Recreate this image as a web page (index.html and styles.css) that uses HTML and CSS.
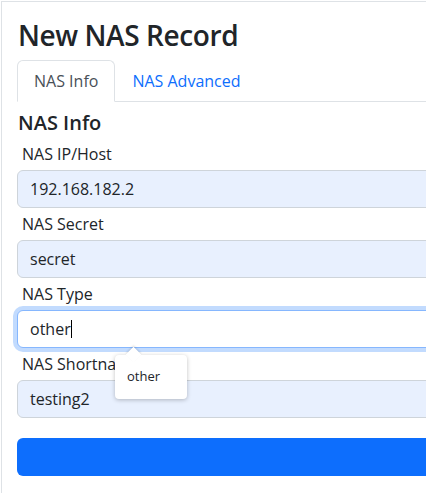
FILE: index.html
```html
<!DOCTYPE html>
<html lang="en">
<head>
<meta charset="utf-8">
<title>New NAS Record</title>
<link rel="stylesheet" href="styles.css">
</head>
<body>
<div class="frame">
  <div class="content">
    <h3 class="title">New NAS Record</h3>
    <ul class="tabs">
      <li class="tab active">NAS Info</li>
      <li class="tab">NAS Advanced</li>
    </ul>
    <h5 class="section">NAS Info</h5>
    <form class="form">
      <label class="label">NAS IP/Host</label>
      <div class="input autofill">192.168.182.2</div>
      <label class="label">NAS Secret</label>
      <div class="input autofill">secret</div>
      <label class="label">NAS Type</label>
      <div class="input focused">other<span class="caret"></span></div>
      <div class="field-wrap">
        <label class="label">NAS Shortname</label>
        <div class="input autofill">testing2</div>
        <div class="popup"><span class="popup-text">other</span></div>
      </div>
      <div class="button"></div>
    </form>
  </div>
</div>
</body>
</html>
```
FILE: styles.css
```css
html, body {
  margin: 0;
  padding: 0;
  background: #fff;
  overflow: hidden;
}
body {
  font-family: "Open Sans", "Noto Sans", sans-serif;
  color: #212529;
  font-size: 16px;
  line-height: 1.5;
}
.frame {
  margin: 1px 0 0 1px;
  border-top: 1px solid #dee2e6;
  border-left: 1px solid #dee2e6;
  width: 424px;
  height: 491px;
  overflow: hidden;
}
.content {
  padding: 17px 0 0 15px;
  width: 700px;
}
.title {
  margin: 0 0 7px 1px;
  font-size: 28px;
  font-weight: 600;
  letter-spacing: -0.4px;
  line-height: 1.2;
}
.tabs {
  list-style: none;
  margin: 0;
  padding: 0;
  display: flex;
  border-bottom: 1px solid #dee2e6;
}
.tab {
  padding: 8px 16px;
  margin-bottom: -1px;
  border: 1px solid transparent;
  border-top-left-radius: 6px;
  border-top-right-radius: 6px;
  color: #0d6efd;
}
.tab.active {
  color: #495057;
  background: #fff;
  border-color: #dee2e6 #dee2e6 #fff;
}
.section {
  margin: 9px 0 7px 1px;
  font-size: 20px;
  font-weight: 600;
  line-height: 1.2;
}
.form {
  display: flex;
  flex-direction: column;
}
.field-wrap {
  position: relative;
  display: flex;
  flex-direction: column;
}
.label {
  display: block;
  margin: 4px 0 4px 5px;
  line-height: 24px;
}
.form > .label:first-child {
  margin-top: 0;
}
.input {
  height: 38px;
  box-sizing: border-box;
  padding: 6px 12px;
  border: 1px solid #ced4da;
  border-radius: 6px;
  line-height: 24px;
  color: #212529;
}
.input.autofill {
  background: #e8f0fe;
}
.input.focused {
  background: #fff;
  border-color: #86b7fe;
  box-shadow: 0 0 0 4px rgba(13, 110, 253, 0.25);
}
.caret {
  display: inline-block;
  width: 1px;
  height: 18px;
  background: #000;
  vertical-align: -3px;
}
.popup {
  position: absolute;
  left: 98px;
  top: 7px;
  width: 72px;
  height: 44px;
  background: #fff;
  border-radius: 4px;
  box-shadow: 0 1px 4px rgba(0, 0, 0, 0.25);
  display: flex;
  align-items: center;
  padding-left: 12px;
  box-sizing: border-box;
}
.popup::before {
  content: "";
  position: absolute;
  left: 13px;
  top: -6px;
  width: 11px;
  height: 11px;
  background: #fff;
  transform: rotate(45deg);
  box-shadow: -1px -1px 2px rgba(0, 0, 0, 0.12);
}
.popup-text {
  position: relative;
  font-size: 13px;
  color: #212529;
}
.button {
  margin-top: 20px;
  height: 38px;
  border-radius: 6px;
  background: #0d6efd;
}
```
